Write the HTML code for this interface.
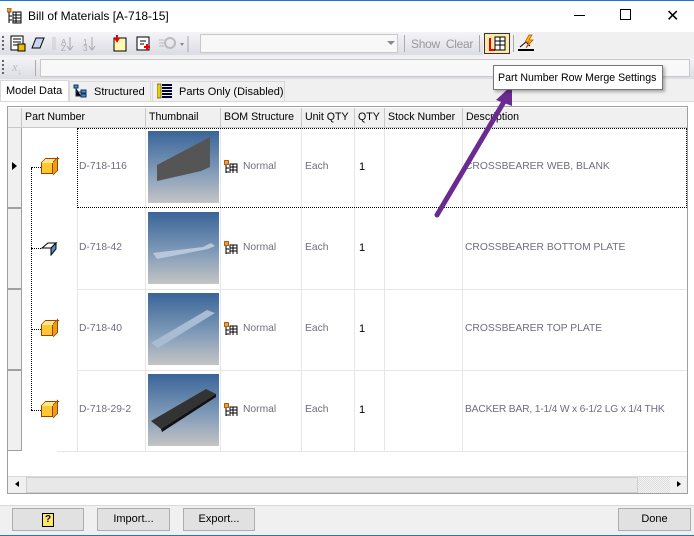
<!DOCTYPE html>
<html><head><meta charset="utf-8"><style>
*{box-sizing:border-box;margin:0;padding:0}
body{width:694px;height:536px;background:#f0f0f0;font-family:"Liberation Sans",sans-serif;font-size:11px;position:relative;overflow:hidden;color:#000}
.a{position:absolute}
.g{color:#6e6e7e;font-size:10.3px!important}
.t{font-size:11px;white-space:nowrap}
.btn{position:absolute;top:508px;height:23px;border:1px solid #adadad;background:#e1e1e1;text-align:center;line-height:21px;font-size:11px}
.vl{position:absolute;width:1px;background:#e6e6e6}
.hl{position:absolute;height:1px;background:#e6e6e6}
.th{position:absolute;top:108px;height:19px;line-height:19px;padding-left:3px;border-right:1px solid #c8c8c8;background:#f0f0f0;font-size:10.6px;white-space:nowrap}
.cube{position:absolute;width:12px;height:12px;background:#ffc830;border:1px solid #a04000}
.cube:before{content:"";position:absolute;left:1px;top:-5px;width:12px;height:4px;background:#ffe890;border:1px solid #a04000;border-bottom:none;transform:skewX(-45deg)}
.cube:after{content:"";position:absolute;left:11px;top:-4px;width:4px;height:12px;background:#e8a010;border:1px solid #a04000;border-left:none;transform:skewY(-45deg)}
.thumb{position:absolute;left:148px;width:71px;height:72px;background:linear-gradient(#3a6598,#7f9ab8 55%,#c4c4c4)}
.bom{position:absolute;left:224px;width:14px;height:13px}
</style></head><body>
<div class="a" style="left:0;top:0;width:694px;height:32px;background:#fff;border-top:1px solid #1a78d4"></div>
<svg class="a" style="left:7px;top:8px" width="16" height="16"><rect x="0" y="0" width="4" height="4" fill="#f0a020" stroke="#a04000" stroke-width=".8"/><path d="M2 4V15M2 8H5M2 12H5" stroke="#000"/><rect x="6" y="4" width="8" height="11" fill="none" stroke="#000"/><path d="M6 7H14M6 10H14M6 13H14M9 4V15" stroke="#000"/></svg>
<div class="a t" style="left:28px;top:9px;font-size:12px">Bill of Materials [A-718-15]</div>
<div class="a" style="left:574px;top:15px;width:11px;height:1px;background:#000"></div>
<div class="a" style="left:620px;top:9px;width:11px;height:11px;border:1px solid #000"></div>
<div class="a" style="left:666px;top:6px;font-size:16px">✕</div>

<div class="a" style="left:0;top:32px;width:483px;height:23px;background:linear-gradient(#f4f4f8,#dcdce4)"></div>
<div class="a" style="left:2px;top:36px;width:2px;height:14px;border-left:2px dotted #666"></div>
<svg class="a" style="left:10px;top:34px" width="190" height="20">
<rect x="1" y="2" width="12" height="14" fill="#fff" stroke="#000"/><path d="M3 5H11M3 8H11M3 11H8" stroke="#000"/><rect x="8" y="10" width="7" height="7" fill="#e8c000" stroke="#000"/>
<path d="M22 14L26 4H34L30 14Z" fill="#c8d4f0" stroke="#000"/>
<path d="M43 3V16M45 3V16" stroke="#ccc"/>
<text x="51" y="11" font-size="8" fill="#aaa">A</text><text x="51" y="17" font-size="8" fill="#aaa">Z</text><path d="M60 3V15M57 12L60 16L63 12" stroke="#aaa" fill="none"/>
<text x="73" y="11" font-size="8" fill="#aaa">1</text><text x="73" y="17" font-size="8" fill="#aaa">3</text><path d="M82 3V15M79 12L82 16L85 12" stroke="#aaa" fill="none"/>
<rect x="104" y="4" width="12" height="13" fill="#fff8b0" stroke="#000"/><path d="M107 1V6M105 4L107 7L109 4" stroke="#e00" stroke-width="2" fill="none"/>
<rect x="127" y="3" width="12" height="13" fill="#fff" stroke="#000"/><path d="M130 7H136M130 10H134" stroke="#000"/><path d="M137 10V16M134 13H140" stroke="#e00" stroke-width="2"/>
<circle cx="160" cy="9" r="5" fill="none" stroke="#bbb" stroke-width="2"/><path d="M149 6H154M149 9H154M149 12H154" stroke="#bbb"/><path d="M170 9L174 9L172 12Z" fill="#888"/>
<path d="M178 2V18" stroke="#aaa"/></svg>
<div class="a" style="left:200px;top:34px;width:198px;height:19px;background:#f8f8f8;border:1px solid #c8c8c8"></div>
<div class="a" style="left:387px;top:41px;border:4px solid transparent;border-top:4px solid #888"></div>
<div class="a" style="left:404px;top:35px;width:1px;height:17px;background:#aaa"></div>
<div class="a t" style="left:411px;top:37px;color:#999;font-size:12px;letter-spacing:-.3px">Show&nbsp; Clear</div>
<div class="a" style="left:479px;top:35px;width:1px;height:17px;background:#aaa"></div>
<div class="a" style="left:484px;top:33px;width:26px;height:21px;background:#ffe9a8;border:1px solid #333"></div>
<svg class="a" style="left:487px;top:35px" width="22" height="18"><path d="M3 3V15H8" stroke="#e00" stroke-width="2" fill="none"/><rect x="8" y="2" width="10" height="13" fill="#fff" stroke="#000"/><path d="M8 6H18M8 10H18M13 2V15" stroke="#000"/></svg>
<div class="a" style="left:513px;top:35px;width:1px;height:17px;background:#aaa"></div>
<svg class="a" style="left:516px;top:34px" width="20" height="20"><path d="M2 16H18" stroke="#000" stroke-width="2"/><path d="M4 13L10 8L14 12" stroke="#000" fill="none"/><path d="M13 1L9 8H13L10 14L17 6H13L16 1Z" fill="#f0c000" stroke="#c04000" stroke-width=".7"/></svg>

<div class="a" style="left:0;top:57px;width:694px;height:22px;background:linear-gradient(#f4f4f8,#dcdce4)"></div>
<div class="a" style="left:2px;top:60px;width:2px;height:14px;border-left:2px dotted #666"></div>
<div class="a t" style="left:12px;top:59px;color:#bbb;font-style:italic;font-size:13px;font-family:'Liberation Serif',serif">x<sub style="font-size:8px">↓</sub></div>
<div class="a" style="left:35px;top:60px;width:1px;height:16px;background:#aaa"></div>
<div class="a" style="left:40px;top:59px;width:650px;height:18px;background:#f8f8f8;border:1px solid #c8c8c8"></div>

<div class="a" style="left:0;top:80px;width:69px;height:22px;background:#fff;border:1px solid #d9d9d9;border-bottom:none"></div>
<div class="a t" style="left:6px;top:85px">Model Data</div>
<div class="a" style="left:69px;top:81px;width:82px;height:21px;border:1px solid #d9d9d9;background:#f0f0f0"></div>
<svg class="a" style="left:73px;top:84px" width="16" height="14"><rect x="1" y="1" width="4" height="3" fill="#4a90d0" stroke="#135"/><path d="M3 4V12H8M3 8H8" stroke="#135"/><rect x="8" y="6" width="5" height="3" fill="#4a90d0" stroke="#135"/><rect x="8" y="10" width="5" height="3" fill="#4a90d0" stroke="#135"/></svg>
<div class="a t" style="left:94px;top:86px">Structured</div>
<div class="a" style="left:152px;top:81px;width:133px;height:21px;border:1px solid #d9d9d9;background:#f0f0f0"></div>
<svg class="a" style="left:157px;top:83px" width="16" height="16"><rect x="0" y="1" width="4" height="14" fill="#e8d000" stroke="#333" stroke-width=".6"/><path d="M5 2H15M5 5H15M5 8H15M5 11H15M5 14H15" stroke="#003" stroke-width="2"/></svg>
<div class="a t" style="left:179px;top:86px">Parts Only (Disabled)</div>
<div class="a" style="left:0;top:101px;width:694px;height:1px;background:#d9d9d9"></div>
<div class="a" style="left:0;top:102px;width:694px;height:404px;background:#fff;border-bottom:1px solid #d9d9d9"></div>

<div class="a" style="left:7px;top:106px;width:681px;height:388px;border:1px solid #a0a0a0;background:#fff"></div>
<div class="th" style="left:8px;width:14px;background:#f0f0f0"></div>
<div class="th" style="left:22px;width:124px">Part Number</div>
<div class="th" style="left:146px;width:75px">Thumbnail</div>
<div class="th" style="left:221px;width:81px">BOM Structure</div>
<div class="th" style="left:302px;width:53px">Unit QTY</div>
<div class="th" style="left:355px;width:30px">QTY</div>
<div class="th" style="left:385px;width:78px">Stock Number</div>
<div class="th" style="left:463px;width:224px;border-right:none">Description</div>
<div class="a" style="left:8px;top:127px;width:679px;height:1px;background:#c8c8c8"></div>
<div class="a" style="left:8px;top:128px;width:14px;height:323px;background:#f0f0f0;border-right:1px solid #a0a0a0"></div>
<div class="a" style="left:8px;top:207px;width:14px;height:2px;background:#a0a0a0"></div>
<div class="a" style="left:8px;top:288px;width:14px;height:2px;background:#a0a0a0"></div>
<div class="a" style="left:8px;top:369px;width:14px;height:2px;background:#a0a0a0"></div>
<div class="a" style="left:8px;top:450px;width:14px;height:1px;background:#a0a0a0"></div>
<div class="a" style="left:12px;top:162px;border:4px solid transparent;border-left:5px solid #000"></div>
<div class="vl" style="left:77px;top:208px;height:243px"></div>
<div class="vl" style="left:145px;top:128px;height:323px"></div>
<div class="vl" style="left:220px;top:128px;height:323px"></div>
<div class="vl" style="left:301px;top:128px;height:323px"></div>
<div class="vl" style="left:354px;top:128px;height:323px"></div>
<div class="vl" style="left:384px;top:128px;height:323px"></div>
<div class="vl" style="left:462px;top:128px;height:323px"></div>
<div class="hl" style="left:77px;top:289px;width:610px"></div>
<div class="hl" style="left:77px;top:370px;width:610px"></div>
<div class="hl" style="left:57px;top:451px;width:630px"></div>
<div class="a" style="left:77px;top:128px;width:610px;height:80px;border:1px dotted #000"></div>
<div class="a" style="left:31px;top:168px;width:1px;height:242px;border-left:1px dotted #000"></div>
<div class="a" style="left:31px;top:167px;width:10px;border-top:1px dotted #000"></div>
<div class="a" style="left:31px;top:248px;width:10px;border-top:1px dotted #000"></div>
<div class="a" style="left:31px;top:329px;width:10px;border-top:1px dotted #000"></div>
<div class="a" style="left:31px;top:410px;width:10px;border-top:1px dotted #000"></div>
<div class="cube" style="left:41px;top:162px"></div>
<svg class="a" style="left:41px;top:240px" width="16" height="16"><path d="M1 8L7 3H15L10 8Z" fill="#fff" stroke="#000"/><path d="M10 8L15 3V9L10 15Z" fill="#5a8ad0" stroke="#000"/></svg>
<div class="cube" style="left:41px;top:324px"></div>
<div class="cube" style="left:41px;top:405px"></div>

<div class="thumb" style="top:131px"></div>
<svg class="a" style="left:148px;top:131px" width="71" height="72"><path d="M9 34L62 6V36L53 40L9 50Z" fill="#555"/></svg>
<div class="thumb" style="top:212px"></div>
<svg class="a" style="left:148px;top:212px" width="71" height="72"><path d="M5 41L55 35L63 31L67 34L60 37L9 47Z" fill="#b8c8da"/></svg>
<div class="thumb" style="top:293px"></div>
<svg class="a" style="left:148px;top:293px" width="71" height="72"><path d="M3 50L59 17L67 20L10 55Z" fill="#a8bcd4"/></svg>
<div class="thumb" style="top:374px"></div>
<svg class="a" style="left:148px;top:374px" width="71" height="72"><path d="M3 47L58 15L68 20L13 55Z" fill="#333"/><path d="M13 55L68 20V23L14 58Z" fill="#111"/></svg>

<svg width="0" height="0" style="position:absolute"><defs><g id="bm"><rect x="0.5" y="0.5" width="4" height="4" fill="#f0a020" stroke="#a04000" stroke-width=".8"/><path d="M2 5V14M2 8H5M2 12H5" stroke="#000"/><rect x="6" y="4" width="7" height="10" fill="none" stroke="#000"/><path d="M6 7H13M6 10H13M9 4V14" stroke="#000"/></g></defs></svg>
<svg class="bom" style="top:160px"><use href="#bm"/></svg>
<svg class="bom" style="top:241px"><use href="#bm"/></svg>
<svg class="bom" style="top:322px"><use href="#bm"/></svg>
<svg class="bom" style="top:403px"><use href="#bm"/></svg>

<div class="a t g" style="left:79px;top:161px">D-718-116</div>
<div class="a t g" style="left:243px;top:161px">Normal</div>
<div class="a t g" style="left:305px;top:161px">Each</div>
<div class="a t" style="left:359px;top:161px">1</div>
<div class="a t g" style="left:465px;top:161px">CROSSBEARER WEB, BLANK</div>
<div class="a t g" style="left:79px;top:242px">D-718-42</div>
<div class="a t g" style="left:243px;top:242px">Normal</div>
<div class="a t g" style="left:305px;top:242px">Each</div>
<div class="a t" style="left:359px;top:242px">1</div>
<div class="a t g" style="left:465px;top:242px">CROSSBEARER BOTTOM PLATE</div>
<div class="a t g" style="left:79px;top:323px">D-718-40</div>
<div class="a t g" style="left:243px;top:323px">Normal</div>
<div class="a t g" style="left:305px;top:323px">Each</div>
<div class="a t" style="left:359px;top:323px">1</div>
<div class="a t g" style="left:465px;top:323px">CROSSBEARER TOP PLATE</div>
<div class="a t g" style="left:79px;top:404px">D-718-29-2</div>
<div class="a t g" style="left:243px;top:404px">Normal</div>
<div class="a t g" style="left:305px;top:404px">Each</div>
<div class="a t" style="left:359px;top:404px">1</div>
<div class="a t g" style="left:465px;top:404px;letter-spacing:-.2px">BACKER BAR, 1-1/4 W x 6-1/2 LG x 1/4 THK</div>

<div class="a" style="left:8px;top:476px;width:679px;height:17px;background:#f0f0f0;border-top:1px solid #d9d9d9"></div>
<div class="a" style="left:26px;top:477px;width:612px;height:16px;background:#e8e8e8;border:1px solid #cfcfcf"></div>
<div class="a" style="left:638px;top:477px;width:32px;height:16px;background:repeating-conic-gradient(#ddd 0 25%,#f4f4f4 0 50%) 0 0/2px 2px"></div>
<div class="a" style="left:12px;top:481px;border:3px solid transparent;border-right:4px solid #000"></div>
<div class="a" style="left:677px;top:481px;border:3px solid transparent;border-left:4px solid #000"></div>

<div class="btn" style="left:12px;width:72px"><span style="display:inline-block;width:12px;height:14px;margin-top:3px;border:1px solid #000;background:#ffe860;line-height:12px;font-weight:bold;color:#003;font-size:10px">?</span></div>
<div class="btn" style="left:97px;width:73px">Import...</div>
<div class="btn" style="left:183px;width:72px">Export...</div>
<div class="btn" style="left:618px;width:73px">Done</div>
<div class="a" style="left:0;top:535px;width:694px;height:1px;background:#1a78d4"></div>

<svg class="a" style="left:0;top:0" width="694" height="536"><path d="M437 215L505 100" stroke="#6a2a90" stroke-width="5" stroke-linecap="round"/><path d="M512 85L496 100L512 106Z" fill="#6a2a90"/></svg>
<div class="a" style="left:493px;top:65px;width:170px;height:25px;background:#fff;border:1px solid #767676;box-shadow:2px 2px 3px rgba(0,0,0,.3)"></div>
<div class="a t" style="left:498px;top:72px;font-size:10.6px">Part Number Row Merge Settings</div>
</body></html>
